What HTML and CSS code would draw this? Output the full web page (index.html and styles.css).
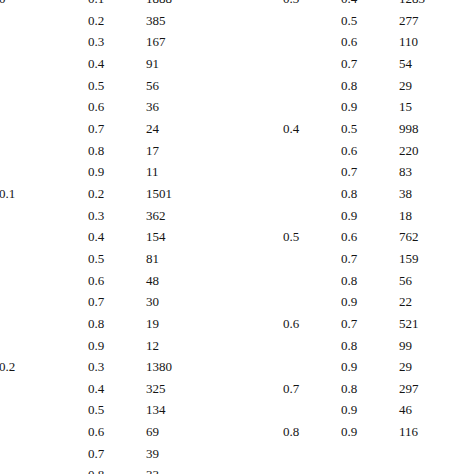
FILE: index.html
```html
<!DOCTYPE html>
<html>
<head>
<meta charset="utf-8">
<link rel="stylesheet" href="styles.css">
</head>
<body>
<div class="page">
  <table class="tbl tbl-left">
    <tbody>
      <tr><td>0</td><td>0.1</td><td>1888</td></tr>
      <tr><td></td><td>0.2</td><td>385</td></tr>
      <tr><td></td><td>0.3</td><td>167</td></tr>
      <tr><td></td><td>0.4</td><td>91</td></tr>
      <tr><td></td><td>0.5</td><td>56</td></tr>
      <tr><td></td><td>0.6</td><td>36</td></tr>
      <tr><td></td><td>0.7</td><td>24</td></tr>
      <tr><td></td><td>0.8</td><td>17</td></tr>
      <tr><td></td><td>0.9</td><td>11</td></tr>
      <tr><td>0.1</td><td>0.2</td><td>1501</td></tr>
      <tr><td></td><td>0.3</td><td>362</td></tr>
      <tr><td></td><td>0.4</td><td>154</td></tr>
      <tr><td></td><td>0.5</td><td>81</td></tr>
      <tr><td></td><td>0.6</td><td>48</td></tr>
      <tr><td></td><td>0.7</td><td>30</td></tr>
      <tr><td></td><td>0.8</td><td>19</td></tr>
      <tr><td></td><td>0.9</td><td>12</td></tr>
      <tr><td>0.2</td><td>0.3</td><td>1380</td></tr>
      <tr><td></td><td>0.4</td><td>325</td></tr>
      <tr><td></td><td>0.5</td><td>134</td></tr>
      <tr><td></td><td>0.6</td><td>69</td></tr>
      <tr><td></td><td>0.7</td><td>39</td></tr>
      <tr><td></td><td>0.8</td><td>33</td></tr>
    </tbody>
  </table>
  <table class="tbl tbl-right">
    <tbody>
      <tr><td>0.3</td><td>0.4</td><td>1283</td></tr>
      <tr><td></td><td>0.5</td><td>277</td></tr>
      <tr><td></td><td>0.6</td><td>110</td></tr>
      <tr><td></td><td>0.7</td><td>54</td></tr>
      <tr><td></td><td>0.8</td><td>29</td></tr>
      <tr><td></td><td>0.9</td><td>15</td></tr>
      <tr><td>0.4</td><td>0.5</td><td>998</td></tr>
      <tr><td></td><td>0.6</td><td>220</td></tr>
      <tr><td></td><td>0.7</td><td>83</td></tr>
      <tr><td></td><td>0.8</td><td>38</td></tr>
      <tr><td></td><td>0.9</td><td>18</td></tr>
      <tr><td>0.5</td><td>0.6</td><td>762</td></tr>
      <tr><td></td><td>0.7</td><td>159</td></tr>
      <tr><td></td><td>0.8</td><td>56</td></tr>
      <tr><td></td><td>0.9</td><td>22</td></tr>
      <tr><td>0.6</td><td>0.7</td><td>521</td></tr>
      <tr><td></td><td>0.8</td><td>99</td></tr>
      <tr><td></td><td>0.9</td><td>29</td></tr>
      <tr><td>0.7</td><td>0.8</td><td>297</td></tr>
      <tr><td></td><td>0.9</td><td>46</td></tr>
      <tr><td>0.8</td><td>0.9</td><td>116</td></tr>
    </tbody>
  </table>
</div>
</body>
</html>
```
FILE: styles.css
```css
html, body {
  margin: 0;
  padding: 0;
  background: #ffffff;
  overflow: hidden;
}
.page {
  display: flex;
  align-items: flex-start;
  margin-top: -12px;
  margin-left: -1px;
  font-family: "Liberation Serif", "Times New Roman", serif;
  font-size: 13px;
  color: #141414;
}
.tbl {
  border-collapse: collapse;
  border-spacing: 0;
  table-layout: fixed;
}
.tbl td {
  padding: 0;
  height: 21.65px;
  line-height: 21.65px;
  text-align: left;
  vertical-align: middle;
  white-space: nowrap;
}
.tbl-left { width: 284px; }
.tbl-left td:nth-child(1) { width: 89px; }
.tbl-left td:nth-child(2) { width: 58px; }
.tbl-left td:nth-child(3) { width: 137px; }
.tbl-right { width: 160px; }
.tbl-right td:nth-child(1) { width: 58px; }
.tbl-right td:nth-child(2) { width: 58px; }
.tbl-right td:nth-child(3) { width: 44px; }
```
